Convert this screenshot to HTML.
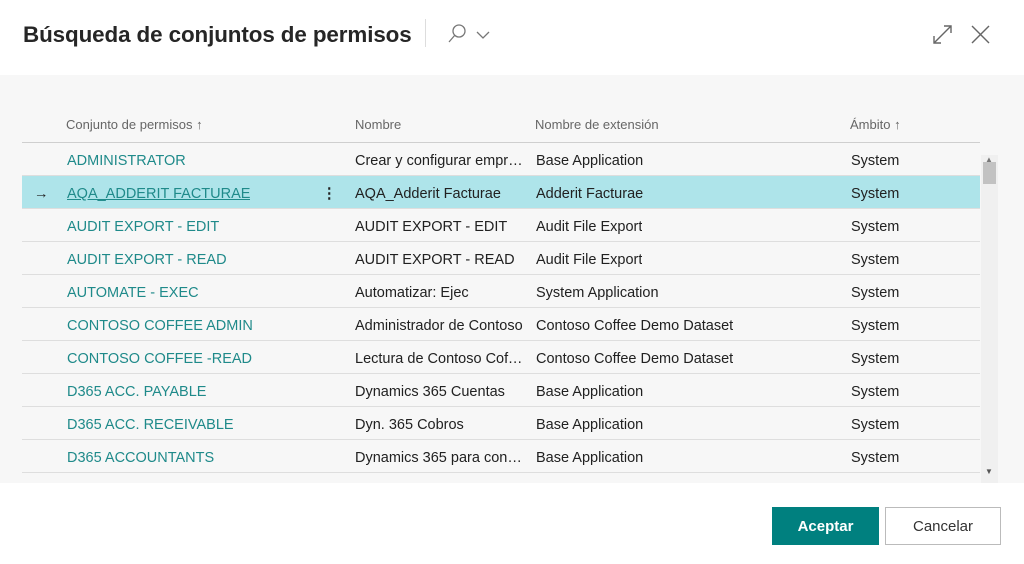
<!DOCTYPE html>
<html><head><meta charset="utf-8"><style>
*{margin:0;padding:0;box-sizing:border-box}
body{width:1024px;height:564px;overflow:hidden;background:#fff;font-family:"Liberation Sans",sans-serif;color:#212121;position:relative}
.title{position:absolute;left:23px;top:22px;font-size:22.4px;font-weight:bold;color:#262626;letter-spacing:-0.1px}
.sep{position:absolute;left:425px;top:19px;width:1px;height:28px;background:#ddd}
.grey{position:absolute;left:0;top:75px;width:1024px;height:408px;background:#f7f7f7;overflow:hidden}
.hdr{position:absolute;top:42px;font-size:13px;color:#666}
.hline{position:absolute;left:22px;top:67px;width:958px;height:1px;background:#cfcfcf}
.row{position:absolute;left:22px;width:958px;height:33px;border-bottom:1px solid #dedede;font-size:14.5px}
.row span{position:absolute;top:10px;white-space:nowrap;overflow:hidden;text-overflow:ellipsis}
.c1{left:45px;color:#1f8a8a}.c2{left:333px;width:170px}.c3{left:514px}.c4{left:829px}
.sel{background:#aee4ea}
.sb{position:absolute;left:981px;width:17px;background:#f0f0f0}
.btn{position:absolute;top:507px;height:38px;font-size:15px;display:flex;align-items:center;justify-content:center}
</style></head><body>
<div class="title">Búsqueda de conjuntos de permisos</div>
<div class="sep"></div>
<svg style="position:absolute;left:446px;top:23px" width="50" height="22" viewBox="0 0 50 22"><circle cx="13" cy="8" r="6" fill="none" stroke="#777" stroke-width="1.3"/><line x1="9" y1="12" x2="3" y2="19" stroke="#777" stroke-width="1.3"/><polyline points="31,9 37,15 43,9" fill="none" stroke="#777" stroke-width="1.3"/></svg>
<svg style="position:absolute;left:932px;top:24px" width="60" height="22" viewBox="0 0 60 22"><g stroke="#666" stroke-width="1.4" fill="none"><line x1="2" y1="19" x2="19" y2="2"/><polyline points="12,2 19,2 19,9"/><polyline points="2,12 2,19 9,19"/><line x1="40" y1="2" x2="57" y2="19"/><line x1="57" y1="2" x2="40" y2="19"/></g></svg>
<div class="grey">
<div class="hdr" style="left:66px">Conjunto de permisos ↑</div>
<div class="hdr" style="left:355px">Nombre</div>
<div class="hdr" style="left:535px">Nombre de extensión</div>
<div class="hdr" style="left:850px">Ámbito ↑</div>
<div class="hline"></div>
<div class="row" style="top:68px"><span class="c1">ADMINISTRATOR</span><span class="c2">Crear y configurar empresas</span><span class="c3">Base Application</span><span class="c4">System</span></div>
<div class="row sel" style="top:101px"><span style="left:12px">→</span><span class="c1" style="text-decoration:underline">AQA_ADDERIT FACTURAE</span><span style="left:300px;font-weight:bold">⋮</span><span class="c2">AQA_Adderit Facturae</span><span class="c3">Adderit Facturae</span><span class="c4">System</span></div>
<div class="row" style="top:134px"><span class="c1">AUDIT EXPORT - EDIT</span><span class="c2">AUDIT EXPORT - EDIT</span><span class="c3">Audit File Export</span><span class="c4">System</span></div>
<div class="row" style="top:167px"><span class="c1">AUDIT EXPORT - READ</span><span class="c2">AUDIT EXPORT - READ</span><span class="c3">Audit File Export</span><span class="c4">System</span></div>
<div class="row" style="top:200px"><span class="c1">AUTOMATE - EXEC</span><span class="c2">Automatizar: Ejec</span><span class="c3">System Application</span><span class="c4">System</span></div>
<div class="row" style="top:233px"><span class="c1">CONTOSO COFFEE ADMIN</span><span class="c2">Administrador de Contoso</span><span class="c3">Contoso Coffee Demo Dataset</span><span class="c4">System</span></div>
<div class="row" style="top:266px"><span class="c1">CONTOSO COFFEE -READ</span><span class="c2">Lectura de Contoso Coffee</span><span class="c3">Contoso Coffee Demo Dataset</span><span class="c4">System</span></div>
<div class="row" style="top:299px"><span class="c1">D365 ACC. PAYABLE</span><span class="c2">Dynamics 365 Cuentas</span><span class="c3">Base Application</span><span class="c4">System</span></div>
<div class="row" style="top:332px"><span class="c1">D365 ACC. RECEIVABLE</span><span class="c2">Dyn. 365 Cobros</span><span class="c3">Base Application</span><span class="c4">System</span></div>
<div class="row" style="top:365px"><span class="c1">D365 ACCOUNTANTS</span><span class="c2">Dynamics 365 para contables</span><span class="c3">Base Application</span><span class="c4">System</span></div>
<div class="row" style="top:398px"><span class="c1">D365 AR/AP, EDIT</span><span class="c2">Dynamics 365 Cuentas</span><span class="c3">Base Application</span><span class="c4">System</span></div>
<div class="sb" style="top:80px;height:328px"></div>
<div style="position:absolute;left:983px;top:87px;width:13px;height:22px;background:#c2c2c2"></div>
<div style="position:absolute;left:985px;top:80px;font-size:8px;color:#777">▲</div>
<div style="position:absolute;left:985px;top:392px;font-size:8px;color:#555">▼</div>
</div>
<div class="btn" style="left:772px;width:107px;background:#00807f;color:#fff;font-weight:bold">Aceptar</div>
<div class="btn" style="left:885px;width:116px;border:1px solid #bbb;color:#333">Cancelar</div>
</body></html>
